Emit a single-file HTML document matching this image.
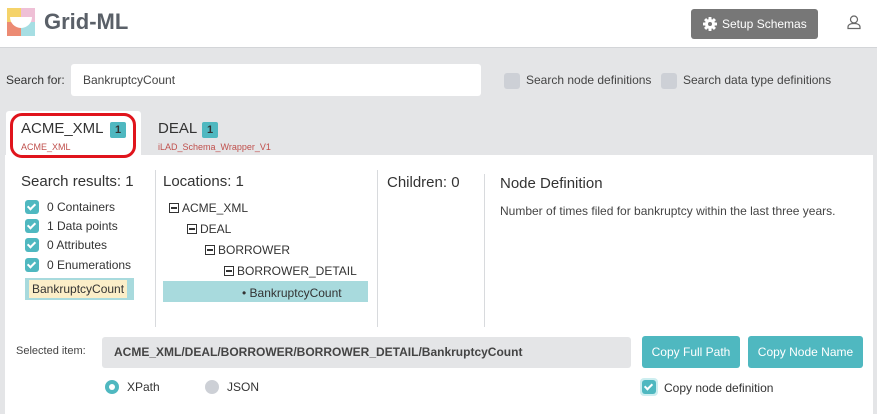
<!DOCTYPE html>
<html><head><style>
*{margin:0;padding:0;box-sizing:border-box}
body{width:877px;height:414px;position:relative;overflow:hidden;background:#fff;font-family:"Liberation Sans",sans-serif;color:#333;}
.a{position:absolute;white-space:nowrap}
.cb{position:absolute;width:14px;height:14px;border-radius:3px;background:#4fb8c0}
.cb:after{content:"";position:absolute;left:4px;top:2px;width:3px;height:6px;border:solid #fff;border-width:0 2px 2px 0;transform:rotate(45deg)}
.gcb{position:absolute;width:16px;height:16px;border-radius:3px;background:#cdd0d6}
.minus{display:inline-block;width:10px;height:10px;border:1.5px solid #333;position:relative;margin-right:3px;vertical-align:-1px}
.minus:after{content:"";position:absolute;left:1px;right:1px;top:3px;height:1.5px;background:#333}
.t{font-size:12px;color:#333}
.btn{position:absolute;background:#4fb8c0;color:#fff;font-size:12px;border-radius:3px;text-align:center;line-height:32px}
</style></head><body>
<div class="a" style="left:7px;top:8px;width:28px;height:28px">
<div class="a" style="left:0;top:0;width:14px;height:14px;background:#f5d36a"></div>
<div class="a" style="left:14px;top:0;width:14px;height:14px;background:#efc0d6"></div>
<div class="a" style="left:0;top:14px;width:14px;height:14px;background:#ec8b73"></div>
<div class="a" style="left:14px;top:14px;width:14px;height:14px;background:#a6dee3"></div>
<div class="a" style="left:3px;top:9px;width:22px;height:11px;border-radius:0 0 11px 11px;background:#fff"></div>
</div>
<div class="a" style="left:44px;top:9px;font-size:22px;font-weight:bold;color:#5a6068">Grid-ML</div>
<div class="a" style="left:691px;top:9px;width:127px;height:30px;background:#777;border-radius:3px;color:#fff;font-size:12px;line-height:30px;padding-left:31px">Setup Schemas</div>
<svg class="a" style="left:703px;top:17px" width="14" height="14" viewBox="0 0 14 14"><g fill="#fff"><circle cx="7" cy="7" r="5"/><rect x="5.5" y="0" width="3" height="14" rx="0.5"/><rect x="0" y="5.5" width="14" height="3" rx="0.5"/><rect x="5.5" y="0" width="3" height="14" rx="0.5" transform="rotate(45 7 7)"/><rect x="5.5" y="0" width="3" height="14" rx="0.5" transform="rotate(-45 7 7)"/></g><circle cx="7" cy="7" r="2" fill="#777"/></svg>
<svg class="a" style="left:846px;top:14px" width="16" height="16" viewBox="0 0 16 16"><circle cx="8" cy="5.5" r="3.5" fill="none" stroke="#666" stroke-width="1.2"/><path d="M2 14.5v-1.5c0-2 2-3.5 6-3.5s6 1.5 6 3.5v1.5z" fill="none" stroke="#666" stroke-width="1.2"/></svg>
<div class="a" style="left:0;top:47px;width:877px;height:108px;background:#e4e5e7;border-top:1px solid #d3d5d8"></div>
<div class="a" style="left:0;top:155px;width:5px;height:259px;background:#e4e5e7"></div>
<div class="a" style="left:873px;top:155px;width:4px;height:259px;background:#e4e5e7"></div>
<div class="a t" style="left:6px;top:73px">Search for:</div>
<div class="a" style="left:71px;top:64px;width:410px;height:32px;background:#fff;border-radius:3px;font-size:12px;line-height:32px;padding-left:12px;color:#444">BankruptcyCount</div>
<div class="gcb" style="left:504px;top:73px"></div>
<div class="a t" style="left:526px;top:73px;color:#444">Search node definitions</div>
<div class="gcb" style="left:661px;top:73px"></div>
<div class="a t" style="left:683px;top:73px;color:#444">Search data type definitions</div>
<div class="a" style="left:6px;top:111px;width:135px;height:45px;background:#fff;border-radius:3px 3px 0 0"></div>
<div class="a" style="left:21px;top:120px;font-size:15px;color:#333">ACME_XML</div>
<div class="a" style="left:110px;top:122px;width:16px;height:16px;background:#4fb8c0;border-radius:2px;font-size:11px;font-weight:bold;text-align:center;line-height:16px;color:#333">1</div>
<div class="a" style="left:21px;top:142px;font-size:9px;color:#c0504d">ACME_XML</div>
<div class="a" style="left:10px;top:113px;width:126px;height:45px;border:3px solid #e0141c;border-radius:12px"></div>
<div class="a" style="left:158px;top:120px;font-size:15px;color:#333">DEAL</div>
<div class="a" style="left:202px;top:122px;width:16px;height:16px;background:#4fb8c0;border-radius:2px;font-size:11px;font-weight:bold;text-align:center;line-height:16px;color:#333">1</div>
<div class="a" style="left:158px;top:142px;font-size:9px;color:#c0504d">iLAD_Schema_Wrapper_V1</div>
<div class="a" style="left:21px;top:173px;font-size:15px">Search results: 1</div>
<div class="cb" style="left:25px;top:200px"></div><div class="a t" style="left:47px;top:200px">0 Containers</div>
<div class="cb" style="left:25px;top:219px"></div><div class="a t" style="left:47px;top:219px">1 Data points</div>
<div class="cb" style="left:25px;top:238px"></div><div class="a t" style="left:47px;top:238px">0 Attributes</div>
<div class="cb" style="left:25px;top:258px"></div><div class="a t" style="left:47px;top:258px">0 Enumerations</div>
<div class="a" style="left:25px;top:278px;width:109px;height:22px;background:#a8dadd;padding:2px 4px"><div style="background:#fbeec8;font-size:12px;line-height:18px;display:inline-block;padding:0 3px 0 3px">BankruptcyCount</div></div>
<div class="a" style="left:155px;top:170px;width:1px;height:157px;background:#d8dadd"></div>
<div class="a" style="left:163px;top:173px;font-size:15px">Locations: 1</div>
<div class="a t" style="left:169px;top:201px"><span class="minus"></span>ACME_XML</div>
<div class="a t" style="left:187px;top:222px"><span class="minus"></span>DEAL</div>
<div class="a t" style="left:205px;top:243px"><span class="minus"></span>BORROWER</div>
<div class="a t" style="left:224px;top:264px"><span class="minus"></span>BORROWER_DETAIL</div>
<div class="a" style="left:163px;top:281px;width:205px;height:21px;background:#a8dadd"></div>
<div class="a t" style="left:242px;top:286px">• BankruptcyCount</div>
<div class="a" style="left:377px;top:170px;width:1px;height:157px;background:#d8dadd"></div>
<div class="a" style="left:387px;top:174px;font-size:15px">Children: 0</div>
<div class="a" style="left:484px;top:174px;width:1px;height:153px;background:#d8dadd"></div>
<div class="a" style="left:500px;top:175px;font-size:15px">Node Definition</div>
<div class="a" style="left:500px;top:204px;font-size:12px;color:#444">Number of times filed for bankruptcy within the last three years.</div>
<div class="a" style="left:16px;top:345px;font-size:11px;color:#444">Selected item:</div>
<div class="a" style="left:102px;top:337px;width:529px;height:31px;background:#e4e5e7;border-radius:3px;font-size:12px;font-weight:bold;line-height:31px;padding-left:12px;color:#444">ACME_XML/DEAL/BORROWER/BORROWER_DETAIL/BankruptcyCount</div>
<div class="btn" style="left:642px;top:336px;width:98px">Copy Full Path</div>
<div class="btn" style="left:748px;top:336px;width:115px">Copy Node Name</div>
<div class="a" style="left:105px;top:380px;width:14px;height:14px;border-radius:50%;background:#4fb8c0"><div style="margin:4px;width:6px;height:6px;border-radius:50%;background:#fff"></div></div>
<div class="a t" style="left:127px;top:380px">XPath</div>
<div class="a" style="left:205px;top:380px;width:14px;height:14px;border-radius:50%;background:#cdd0d6"></div>
<div class="a t" style="left:227px;top:380px">JSON</div>
<div class="a" style="left:640px;top:378px;width:18px;height:18px;border-radius:4px;background:#cdeef0"></div>
<div class="cb" style="left:642px;top:380px"></div>
<div class="a t" style="left:664px;top:381px">Copy node definition</div>
</body></html>
